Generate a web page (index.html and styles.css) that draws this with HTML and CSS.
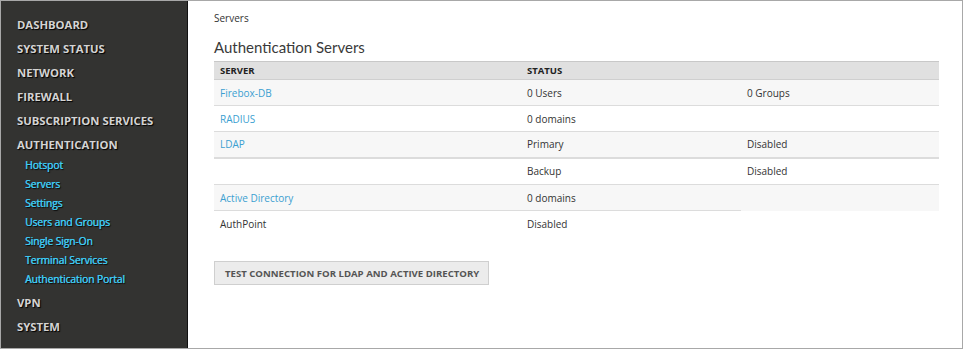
FILE: index.html
```html
<!DOCTYPE html>
<html>
<head>
<meta charset="utf-8">
<link rel="stylesheet" href="styles.css">
</head>
<body>
<div class="frame">
  <nav class="sidebar">
    <div class="nav-item">DASHBOARD</div>
    <div class="nav-item">SYSTEM STATUS</div>
    <div class="nav-item">NETWORK</div>
    <div class="nav-item">FIREWALL</div>
    <div class="nav-item">SUBSCRIPTION SERVICES</div>
    <div class="nav-item">AUTHENTICATION</div>
    <div class="sub-list">
      <div class="sub-item">Hotspot</div>
      <div class="sub-item">Servers</div>
      <div class="sub-item">Settings</div>
      <div class="sub-item">Users and Groups</div>
      <div class="sub-item">Single Sign-On</div>
      <div class="sub-item">Terminal Services</div>
      <div class="sub-item">Authentication Portal</div>
    </div>
    <div class="nav-item">VPN</div>
    <div class="nav-item">SYSTEM</div>
  </nav>
  <main class="main">
    <div class="crumb">Servers</div>
    <h1 class="title">Authentication Servers</h1>
    <table class="servers">
      <colgroup><col class="c1"><col class="c2"><col class="c3"></colgroup>
      <thead>
        <tr><th>SERVER</th><th>STATUS</th><th></th></tr>
      </thead>
      <tbody>
        <tr class="odd"><td><a>Firebox-DB</a></td><td>0 Users</td><td>0 Groups</td></tr>
        <tr><td><a>RADIUS</a></td><td>0 domains</td><td></td></tr>
        <tr class="odd"><td><a>LDAP</a></td><td>Primary</td><td>Disabled</td></tr>
        <tr class="thick"><td></td><td>Backup</td><td>Disabled</td></tr>
        <tr class="odd"><td><a>Active Directory</a></td><td>0 domains</td><td></td></tr>
        <tr><td>AuthPoint</td><td>Disabled</td></tr>
      </tbody>
    </table>
    <button class="btn">TEST CONNECTION FOR LDAP AND ACTIVE DIRECTORY</button>
  </main>
</div>
</body>
</html>
```

FILE: styles.css
```css
* { box-sizing: border-box; }
html, body { margin: 0; padding: 0; background: #fff; }
body { font-family: "Open Sans", "DejaVu Sans", sans-serif; }

.frame {
  width: 963px;
  height: 349px;
  border: 1px solid #a8a8a8;
  display: flex;
  overflow: hidden;
}

.sidebar {
  width: 187px;
  flex: none;
  background: #333331;
  border-right: 1px solid #111;
  padding-top: 12px;
  padding-left: 16px;
}

.nav-item {
  height: 24px;
  line-height: 24px;
  font-size: 11.3px;
  font-weight: 700;
  color: #d4d4d4;
  text-shadow: 1px 1px 1px #000;
  white-space: nowrap;
}

.sub-list {
  margin-top: -1px;
  margin-bottom: 2px;
}

.sub-item {
  height: 19px;
  line-height: 19px;
  font-size: 10.3px;
  font-weight: 400;
  letter-spacing: -0.1px;
  color: #3fcaf2;
  text-shadow: 0.4px 0 0 #3fcaf2, 1px 1px 1px #000;
  padding-left: 8px;
  white-space: nowrap;
}

.main {
  flex: 1;
  padding: 9px 22px 0 26px;
  color: #333;
}

.crumb {
  font-size: 10px;
  line-height: 16px;
  color: #333;
}

.title {
  margin: 11px 0 0 0;
  font-family: "Lato", "Open Sans", sans-serif;
  font-weight: 400;
  font-size: 15px;
  line-height: 20px;
  color: #3a3a3a;
}

.servers {
  margin-top: 4px;
  width: 725px;
  border-collapse: collapse;
  font-size: 10px;
  table-layout: fixed;
}
.servers col.c1 { width: 307px; }
.servers col.c2 { width: 220px; }
.servers col.c3 { width: 198px; }

.servers th {
  background: #e0e0e0;
  border-top: 1px solid #c8c8c8;
  border-bottom: 1px solid #cfcfcf;
  height: 18px;
  padding: 0 6px 1px;
  text-align: left;
  font-size: 9.5px;
  font-weight: 700;
  color: #222;
}

.servers td {
  height: 26px;
  padding: 0 6px;
  border-top: 1px solid #dcdcdc;
  color: #333;
  white-space: nowrap;
}
.servers tbody tr:first-child td { border-top: none; }
.servers tr.odd { background: #f7f7f7; }
.servers tr.thick td { border-top: 2px solid #dcdcdc; height: 27px; }
.servers a { color: #3b9fd1; }

.btn {
  display: block;
  margin-top: 24px;
  width: 275px;
  height: 24px;
  background: #ececec;
  border: 1px solid #cfcfcf;
  font-family: "Open Sans", sans-serif;
  font-size: 9.6px;
  font-weight: 700;
  color: #555;
  text-align: left;
  padding: 2px 0 0 10px;
  white-space: nowrap;
}
```
